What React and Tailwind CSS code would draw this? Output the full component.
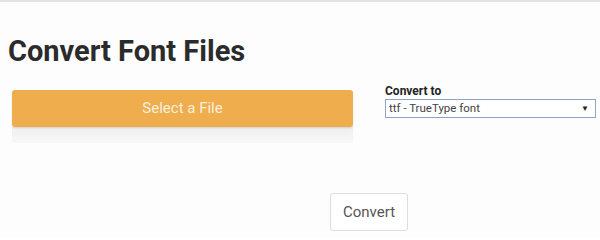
import React from 'react';

const App = () => {
  return (
    <div className="w-[600px] h-[237px] overflow-hidden bg-[#fdfdfd] border-t-2 border-[#e2e2e2] font-['Roboto',sans-serif]">
      <h1 className="pl-2 pt-[33px] text-[29px] leading-[32px] font-bold text-[#2b2b2b]">
        Convert Font Files
      </h1>

      <div className="flex mt-[23px]">
        <div className="ml-3 w-[341px]">
          <button className="w-full h-[37px] rounded-[3px] bg-[#efad4e] text-[15px] text-[#fbefdc] shadow-[0_1px_2px_rgba(0,0,0,0.12)]">
            Select a File
          </button>
          <div className="h-[16px] bg-gradient-to-b from-[#eeeeee] to-[#f8f8f8]" />
        </div>

        <div className="ml-[32px] -mt-[6px] w-[211px]">
          <div className="text-[12px] leading-[14px] font-bold text-[#222]">Convert to</div>
          <div className="mt-[1px] h-[19px] border border-[#8ea2cc] bg-white flex items-center justify-between pl-[3px] pr-[6px]">
            <span className="text-[11.5px] text-[#444] leading-none">ttf - TrueType font</span>
            <span className="text-[8px] text-[#222] leading-none">▼</span>
          </div>
        </div>
      </div>

      <div className="pl-[330px] mt-[50px]">
        <button className="w-[78px] h-[38px] border border-[#dcdcdc] rounded-[3px] bg-white text-[15px] text-[#555]">
          Convert
        </button>
      </div>
    </div>
  );
};

export default App;
